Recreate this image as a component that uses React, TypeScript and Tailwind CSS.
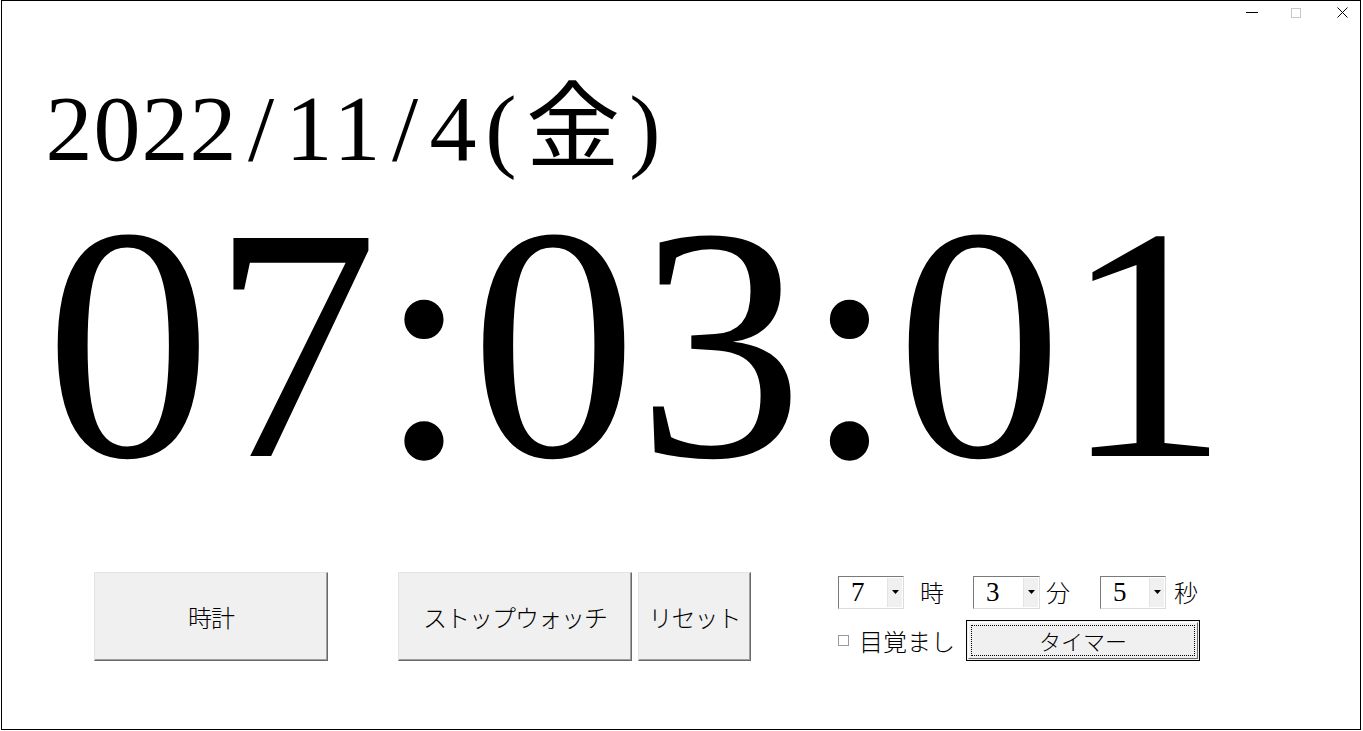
const serif = { fontFamily: "'Liberation Serif', 'Noto Sans CJK JP', serif" };
const jp = { fontFamily: "'Noto Sans CJK JP', sans-serif" };

// the date is set in a fixed-pitch (Mincho-like) face: every half-width char takes the same cell
const dateChars = ["2", "0", "2", "2", "/", "1", "1", "/", "4", "(", "金", ")"];

function WinButton({ label, className }: { label: string; className: string }) {
  return (
    <button
      className={`flex items-center justify-center bg-[#f0f0f0] border border-t-[#e3e3e3] border-l-[#e3e3e3] border-r-[#696969] border-b-[#696969] shadow-[inset_-1px_-1px_0_#a0a0a0] text-[24px] font-light tracking-[-1px] text-black ${className}`}
      style={jp}
    >
      {label}
    </button>
  );
}

function Combo({ value, className }: { value: string; className: string }) {
  return (
    <div
      className={`flex h-[33px] border border-t-[#7a7a7a] border-l-[#7a7a7a] border-r-[#dcdcdc] border-b-[#dcdcdc] bg-white ${className}`}
    >
      <div className="flex-1 pl-[12px] text-[27px] leading-[31px] text-black" style={serif}>
        {value}
      </div>
      <div className="my-px mr-px flex w-[15px] items-center justify-center bg-[#f0f0f0] border-l border-[#e3e3e3]">
        <svg width="7" height="4" viewBox="0 0 7 4">
          <path d="M0 0h7L3.5 4z" fill="#000" />
        </svg>
      </div>
    </div>
  );
}

export default function App() {
  return (
    <div className="h-[731px] w-[1363px] bg-white pl-px pr-[2px] pb-px">
      <div className="flex h-full flex-col border border-black">
        {/* caption buttons */}
        <div className="flex h-[23px] items-center justify-end pr-[12px]">
          <svg width="12" height="2" viewBox="0 0 12 2" className="mr-[33px]">
            <rect width="12" height="1" fill="#000" />
          </svg>
          <svg width="10" height="10" viewBox="0 0 10 10" className="mr-[36px]">
            <rect x="0.5" y="0.5" width="9" height="9" fill="none" stroke="#c8c8c8" />
          </svg>
          <svg width="11" height="11" viewBox="0 0 11 11">
            <path d="M0.5 0.5l10 10M10.5 0.5l-10 10" stroke="#000" strokeWidth="1" />
          </svg>
        </div>

        {/* date */}
        <div className="mt-[57px] flex h-[94px] pl-[43px] text-[94px] leading-none text-black" style={serif}>
          {dateChars.map((c, i) =>
            c === "金" ? (
              <span key={i} className="inline-block w-[96px] text-center">
                {c}
              </span>
            ) : (
              <span key={i} className="inline-block w-[48px] text-center">
                {c}
              </span>
            )
          )}
        </div>

        {/* time */}
        <div className="mt-[2px] pl-[43px] text-[333px] leading-none text-black" style={serif}>
          07:03:01
        </div>

        {/* controls */}
        <div className="mt-[62px] flex items-start pl-[92px]">
          <WinButton label="時計" className="h-[89px] w-[234px]" />
          <WinButton label="ストップウォッチ" className="ml-[70px] h-[89px] w-[234px]" />
          <WinButton label="リセット" className="ml-[6px] h-[89px] w-[113px]" />

          <div className="ml-[87px] mt-[2px] flex flex-col">
            <div className="flex items-center text-[24px] font-light text-black" style={jp}>
              <Combo value="7" className="w-[66px]" />
              <span className="ml-[16px]">時</span>
              <Combo value="3" className="ml-[29px] w-[67px]" />
              <span className="ml-[6px]">分</span>
              <Combo value="5" className="ml-[30px] w-[66px]" />
              <span className="ml-[8px]">秒</span>
            </div>
            <div className="mt-[10px] flex items-center">
              <div className="h-[11px] w-[11px] border border-[#9a9a9a] bg-white" />
              <span className="ml-[10px] text-[24px] font-light text-black" style={jp}>
                目覚まし
              </span>
              <button className="ml-[11px] h-[41px] w-[234px] border border-black bg-[#f0f0f0] p-px">
                <div className="flex h-full w-full items-center justify-center border border-t-[#fff] border-l-[#fff] border-r-[#696969] border-b-[#696969] p-[2px]">
                  <div
                    className="flex h-full w-full items-center justify-center border border-dotted border-black text-[22px] font-light text-black"
                    style={jp}
                  >
                    タイマー
                  </div>
                </div>
              </button>
            </div>
          </div>
        </div>
      </div>
    </div>
  );
}
